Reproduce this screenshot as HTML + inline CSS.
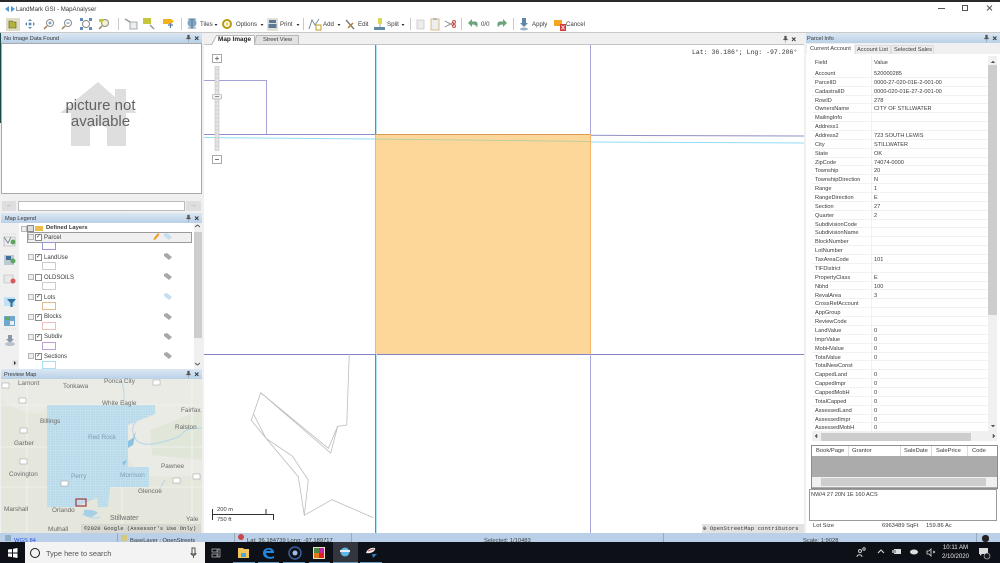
<!DOCTYPE html>
<html><head><meta charset="utf-8"><style>
html,body{margin:0;padding:0;width:1000px;height:563px;overflow:hidden;background:#f0f0f0;font-family:"Liberation Sans",sans-serif;color:#333}
div,span,svg{position:absolute}
.t{font-size:6.100px;line-height:8px;white-space:nowrap;color:#3a3a3a}
.hd{background:linear-gradient(#dbe7f3,#b9d0e8);height:10px}
.hd .t{left:3px;top:2px;color:#333;font-size:5.600px}
.sep{width:1px;height:12px;top:18px;background:#c9c9c9}
.sw{left:42px;width:12px;height:6px;background:#fff;border:1px solid #ccc}
.ck{left:35px;width:5px;height:5px;border:1px solid #8a8a8a;background:#fff;font-size:6px;line-height:5px;text-align:center;color:#444}
.ex{left:28px;width:4px;height:4px;border:1px solid #b5b5b5;background:#eee}
.lb{left:44px;font-size:6px}
.r{left:0;width:176px;height:8.860px;border-bottom:1px solid #f1f1f1;box-sizing:border-box}
.r .t{top:1px;line-height:8px;font-size:5.600px}
.r .a{left:3px}.r .b{left:62px}
.m{font-size:6.400px;color:#6a6a6a;white-space:nowrap;line-height:8px}
.st{top:3.500px;font-size:5.800px}
</style></head><body>
<div style="left:0;top:0;width:1000px;height:2px;background:#2a2a2a"></div>
<div style="left:0;top:2px;width:1000px;height:30px;background:#fff"></div>
<svg style="left:5px;top:5px" width="10" height="8" viewBox="0 0 10 8"><path d="M0 4 L4 1 V7 Z M10 4 L6 1 V7 Z" fill="#4d9ad6"/></svg>
<div class="t" style="left:16px;top:6px;font-size:6.100px">LandMark GSI - MapAnalyser</div>
<svg style="left:936px;top:3px" width="60" height="12" viewBox="0 0 60 12"><path d="M2 5.500H9" stroke="#555"/><path d="M26.500 2.500h5v5h-5z" fill="none" stroke="#555"/><path d="M51 2.500L56 7.500M56 2.500L51 7.500" stroke="#555"/></svg>

<!-- toolbar -->
<div style="left:0;top:32px;width:1000px;height:1px;background:#c9c9c9"></div>
<div style="left:6px;top:18px;width:14px;height:13px;background:#e0ddc5"></div>
<div style="left:267px;top:18px;width:11px;height:13px;background:#e6e2d6"></div>
<svg style="left:0;top:16px" width="620" height="16" viewBox="0 0 620 16">
<path d="M9 5h3l1 1h3v6H9z" fill="#b4b43a" stroke="#55552a" stroke-width=".6"/>
<g fill="#5f8cb5"><path d="M30 3l2 2h-4zM30 13l2-2h-4zM25 8l2-2v4zM35 8l-2-2v4z"/><circle cx="30" cy="8" r="1.500"/></g>
<g fill="#fff" stroke="#8d8d8d"><circle cx="50" cy="7" r="3.500"/><circle cx="68" cy="7" r="3.500"/></g>
<path d="M47 10l-3 3M65 10l-3 3" stroke="#a08050" stroke-width="1.500"/><path d="M48.500 7h3M50 5.500v3M66.500 7h3" stroke="#4a7fb0"/>
<path d="M80 2h3v3h-3zM89 2h3v3h-3zM80 11h3v3h-3zM89 11h3v3h-3z" fill="#5f8cb5"/><circle cx="86" cy="8" r="3.500" fill="#fff" stroke="#888"/>
<circle cx="105" cy="7" r="3.500" fill="#f3f1c8" stroke="#8d8d8d"/><path d="M102 10l-3 3" stroke="#a08050" stroke-width="1.500"/><path d="M99 3h4v3h-4z" fill="#c4c440"/>
<path d="M125 3l5 3" stroke="#999" stroke-width="1.500"/><path d="M130 6h7v7h-7z" fill="#eee" stroke="#88979f" stroke-width=".8"/>
<path d="M143 2h8v6h-8z" fill="#c6c63c"/><path d="M150 9l4 4" stroke="#999" stroke-width="1.500"/>
<path d="M163 3h8l3 2-3 3h-8z" fill="#f3b21c"/><path d="M168 9h5M170.500 7v5" stroke="#5f7fa0" stroke-width="1.200"/>
<circle cx="192" cy="7" r="4.500" fill="#7fa6c4"/><path d="M188 3h8M188 12h8M192 3v10" stroke="#4e7491" stroke-width=".8"/>
<circle cx="227" cy="8" r="4" fill="none" stroke="#b99a10" stroke-width="2"/><circle cx="227" cy="8" r="1.500" fill="#e5d35c"/>
<path d="M268 3h9v10h-9z" fill="#ddd"/><path d="M269 4h7v3h-7zM268.500 8h8v4h-8z" fill="#5c7996"/>
<path d="M309 13L312 4l3 5 4-6" fill="none" stroke="#7a8d9a"/><path d="M316 9h5v5h-5z" fill="#fff" stroke="#c79a20"/>
<path d="M346 4l8 9" stroke="#7d7d7d" stroke-width="1.500"/><path d="M348 12l5-5" stroke="#b87e30" stroke-width="1.500"/>
<path d="M378 2h4v6h-4z" fill="#d7d957"/><path d="M374 11h11v3h-11z" fill="#5f8aa6"/><path d="M380 8v3" stroke="#aaa"/>
<path d="M417 4h7v9h-7z" fill="#ececec" stroke="#c6c6c6" stroke-width=".8"/>
<path d="M431 3h8v11h-8z" fill="#eee" stroke="#d8b98a"/><path d="M433 2h4v2h-4z" fill="#bba"/>
<path d="M445 5l9 5M445 11l9-5" stroke="#8a8a8a"/><circle cx="454" cy="6" r="1.500" fill="none" stroke="#cc4b4b"/><circle cx="454" cy="10" r="1.500" fill="none" stroke="#cc4b4b"/>
<path d="M468 7l4-4v2.500h3c3 0 3 3 2 6-1-2-2-3-5-3v2.500z" fill="#69a67e"/>
<path d="M507 7l-4-4v2.500h-3c-3 0-3 3-2 6 1-2 2-3 5-3v2.500z" fill="#69a67e"/>
<path d="M522 2h4v5h2l-4 4-4-4h2z" fill="#5d86a8"/><ellipse cx="524" cy="13" rx="4" ry="1.500" fill="#9bb3c6"/>
<path d="M554 4h8v6h-8z" fill="#f5a623"/><path d="M560 8h6v7h-6z" fill="#cf3a3a"/><path d="M561.500 9.500l3 4M564.500 9.500l-3 4" stroke="#fff" stroke-width=".8"/>
</svg>
<div class="t" style="left:200px;top:21px">Tiles</div><div class="t" style="left:236px;top:21px">Options</div><div class="t" style="left:280px;top:21px">Print</div><div class="t" style="left:323px;top:21px">Add</div><div class="t" style="left:358px;top:21px">Edit</div><div class="t" style="left:387px;top:21px">Split</div><div class="t" style="left:481px;top:21px">0/0</div><div class="t" style="left:532px;top:21px">Apply</div><div class="t" style="left:566px;top:21px">Cancel</div>
<svg style="left:0;top:22px" width="420" height="6"><path d="M214.500 2h3l-1.500 2zM260.500 2h3l-1.500 2zM296.500 2h3l-1.500 2zM337.500 2h3l-1.500 2zM401.500 2h3l-1.500 2z" fill="#333"/></svg>
<div class="sep" style="left:118px"></div><div class="sep" style="left:181px"></div><div class="sep" style="left:303px"></div><div class="sep" style="left:410px"></div><div class="sep" style="left:461px"></div><div class="sep" style="left:513px"></div>

<!-- left: image panel -->
<div style="left:0;top:33px;width:1px;height:90px;background:#1d4a4a"></div>
<div class="hd" style="left:1px;top:33px;width:201px"><div class="t">No Image Data Found</div><svg style="left:184px;top:1px" width="17" height="9"><path d="M2.500 1h2v3h1v1h-4V4h1zM3.500 5v3" fill="#555" stroke="#555" stroke-width=".3"/><path d="M10 2.500l3.500 3.500M13.500 2.500L10 6" stroke="#333" stroke-width=".9"/></svg></div>
<div style="left:1px;top:43px;width:199px;height:149px;background:#fff;border:1px solid #a9a9a9"></div>
<svg style="left:0;top:0" width="202" height="200"><path d="M98 82L60 113H71V146H90V128Q98 122 107 128V146H126V113H137L126 103V89H115V97Z" fill="#dedede"/></svg>
<div style="left:1px;top:98px;width:199px;text-align:center;font-size:15px;line-height:16px;color:#636363">picture not<br>available</div>
<div style="left:2px;top:201px;width:14px;height:10px;background:#dedede"></div>
<div style="left:18px;top:201px;width:165px;height:8px;background:#fff;border:1px solid #bbb"></div>
<div style="left:186px;top:201px;width:15px;height:10px;background:#dedede"></div>
<div class="t" style="left:6px;top:202px;color:#999">←</div><div class="t" style="left:190px;top:202px;color:#999">→</div>

<!-- legend -->
<div class="hd" style="left:1px;top:213px;width:201px"><div class="t" style="left:4px">Map Legend</div><svg style="left:184px;top:1px" width="17" height="9"><path d="M2.500 1h2v3h1v1h-4V4h1zM3.500 5v3" fill="#555" stroke="#555" stroke-width=".3"/><path d="M10 2.500l3.500 3.500M13.500 2.500L10 6" stroke="#333" stroke-width=".9"/></svg></div>
<div style="left:19px;top:223px;width:175px;height:146px;background:#fff"></div>
<div style="left:194px;top:223px;width:8px;height:146px;background:#f0f0f0"></div>
<div style="left:194px;top:232px;width:8px;height:106px;background:#cdcdcd"></div>
<div style="left:21px;top:226px;width:4px;height:4px;border:1px solid #b5b5b5;background:#eee"></div>
<div style="left:27px;top:225px;width:5px;height:5px;border:1px solid #8a8a8a;background:#ddd"></div>
<div style="left:35px;top:226px;width:8px;height:5px;background:#eebc4a"></div>
<div class="t" style="left:46px;top:224px;font-weight:bold;font-size:5.800px">Defined Layers</div>
<div style="left:27px;top:232px;width:163px;height:9px;background:#f0f0f0;border:1px solid #9a9a9a"></div>
<div class="ex" style="top:234px"></div><div class="ck" style="top:234px">✓</div><div class="t lb" style="top:234px">Parcel</div><div class="sw" style="top:242px;border-color:#9a9ad8"></div>
<div class="ex" style="top:254px"></div><div class="ck" style="top:254px">✓</div><div class="t lb" style="top:254px">LandUse</div><div class="sw" style="top:262px"></div>
<div class="ex" style="top:274px"></div><div class="ck" style="top:274px"></div><div class="t lb" style="top:274px">OLDSOILS</div><div class="sw" style="top:282px"></div>
<div class="ex" style="top:294px"></div><div class="ck" style="top:294px">✓</div><div class="t lb" style="top:294px">Lots</div><div class="sw" style="top:302px;border-color:#e4b98e"></div>
<div class="ex" style="top:314px"></div><div class="ck" style="top:314px">✓</div><div class="t lb" style="top:313px">Blocks</div><div class="sw" style="top:322px;border-color:#f0bcbc"></div>
<div class="ex" style="top:334px"></div><div class="ck" style="top:334px">✓</div><div class="t lb" style="top:333px">Subdiv</div><div class="sw" style="top:342px;border-color:#bb9fd6"></div>
<div class="ex" style="top:353px"></div><div class="ck" style="top:353px">✓</div><div class="t lb" style="top:353px">Sections</div><div class="sw" style="top:361px;border-color:#a8e0f2"></div>
<svg style="left:0;top:223px" width="202" height="146" viewBox="0 0 202 146">
<path d="M154 15l4-5 1.500 1.500-4 5-2 .5z" fill="#ee9a2c"/>
<g fill="#c5dff2"><path d="M164 11l3-1 5 4-3 3-5-4z"/><path d="M164 71l3-1 5 4-3 3-5-4z"/></g>
<g fill="#a8a8a8"><path d="M164 31l3-1 5 4-3 3-5-4z"/><path d="M164 51l3-1 5 4-3 3-5-4z"/><path d="M164 91l3-1 5 4-3 3-5-4z"/><path d="M164 111l3-1 5 4-3 3-5-4z"/><path d="M164 130l3-1 5 4-3 3-5-4z"/></g>
<path d="M4 14h11v9H4z" fill="#eee" stroke="#a9a9a9" stroke-width=".6"/><path d="M4 14l4 6 3-6" fill="none" stroke="#7a8d9a"/><circle cx="13" cy="19" r="2.500" fill="#5fa55f"/>
<path d="M4 32h10v10H4z" fill="#bcc8d2"/><path d="M6 33h5v4H6z" fill="#3f6f97"/><circle cx="13" cy="38" r="2.500" fill="#5fa55f"/>
<path d="M4 52h9v8H4z" fill="#e9e9e9" stroke="#b5b5b5" stroke-width=".6"/><circle cx="13" cy="58" r="2.500" fill="#d9585c"/>
<path d="M4 74h11v9H4z" fill="#bfe1f3"/><path d="M7 76h9l-3.500 4v4h-2v-4z" fill="#36719d"/>
<path d="M4 93h11v10H4z" fill="#6fa7cf"/><path d="M5 94h5v3H5z" fill="#64a85f"/><path d="M10 98h4v4h-4z" fill="#eee"/>
<path d="M8 112h4v4h2l-4 4-4-4h2z" fill="#8898a8"/><ellipse cx="10" cy="121" rx="5" ry="2" fill="#b8c2cc"/>
<path d="M3 11h14M3 106h14" stroke="#d6d6d6" stroke-dasharray="1 1"/>
<path d="M195 4l2.500-2 2.500 2M195 140l2.500 2 2.500-2" stroke="#555" fill="none"/>
<path d="M12 137h6v6h-6z" fill="#e4e4e4"/><path d="M14 138l2 2-2 2z" fill="#333"/>
</svg>

<!-- preview -->
<div class="hd" style="left:1px;top:369px;width:201px"><div class="t">Preview Map</div><svg style="left:184px;top:1px" width="17" height="9"><path d="M2.500 1h2v3h1v1h-4V4h1zM3.500 5v3" fill="#555" stroke="#555" stroke-width=".3"/><path d="M10 2.500l3.500 3.500M13.500 2.500L10 6" stroke="#333" stroke-width=".9"/></svg></div>
<svg style="left:1px;top:379px" width="201" height="154" viewBox="1 379 201 154">
<defs><pattern id="g" width="2.500" height="2.500" patternUnits="userSpaceOnUse"><rect width="2.500" height="2.500" fill="#b4d8e9"/><path d="M0 .5H2.500M.5 0V2.500" stroke="#cfe6f1" stroke-width=".5"/></pattern></defs>
<rect x="1" y="379" width="201" height="154" fill="#ebebe5"/>
<path d="M1 400q30 20 45 10t50 20 40 40 66 5V533H1z" fill="#e5e7dc"/>
<path d="M150 430l52-20v50l-50-5z" fill="#e0e6d8"/>
<path d="M121 379q5 15 2 28M155 413q-25 5-22 20t25 10 25-10 19-5M130 441q-5 10-3 20M165 480l-6 10M82 514q12 6 18 3" fill="none" stroke="#b5d6ea" stroke-width="1"/>
<path d="M1 405H202M1 447H202M1 487H202M27 379V533M122 405V533M192 379V533" stroke="#f4f4f0" stroke-width=".8"/>
<path d="M47 405H155L155 414 128 425V467H149V487H110L108 507H98L97 498 75 507H47Z" fill="url(#g)"/>
<path d="M128 441l5-3 3-7-3 14-5 3zM122 462l5-2-3 6z" fill="#8dc1e0"/>
<path d="M84 510q10-1 14 3l-6 4-8-2z" fill="#a6cfe8"/>
<rect x="76" y="499" width="10" height="7" fill="none" stroke="#a1393e" stroke-width="1.200"/>
<g fill="#fff" stroke="#999" stroke-width=".5"><rect x="2" y="383" width="7" height="5"/><rect x="153" y="380" width="7" height="5"/><rect x="19" y="398" width="7" height="5"/><rect x="20" y="428" width="7" height="5"/><rect x="20" y="459" width="7" height="5"/><rect x="173" y="478" width="7" height="5"/><rect x="193" y="474" width="7" height="5"/><rect x="61" y="481" width="7" height="5"/></g>
</svg>
<div class="m" style="left:18px;top:380px">Lamont</div><div class="m" style="left:63px;top:383px">Tonkawa</div><div class="m" style="left:104px;top:378px">Ponca City</div><div class="m" style="left:102px;top:400px">White Eagle</div><div class="m" style="left:181px;top:407px">Fairfax</div><div class="m" style="left:40px;top:418px">Billings</div><div class="m" style="left:175px;top:424px">Ralston</div><div class="m" style="left:88px;top:434px;color:#7d9fb3">Red Rock</div><div class="m" style="left:14px;top:440px">Garber</div><div class="m" style="left:161px;top:463px">Pawnee</div><div class="m" style="left:9px;top:471px">Covington</div><div class="m" style="left:120px;top:472px;color:#7d9fb3">Morrison</div><div class="m" style="left:71px;top:473px;color:#7d9fb3">Perry</div><div class="m" style="left:138px;top:488px">Glencoe</div><div class="m" style="left:4px;top:506px">Marshall</div><div class="m" style="left:52px;top:507px">Orlando</div><div class="m" style="left:110px;top:515px;font-size:7px">Stillwater</div><div class="m" style="left:186px;top:516px">Yale</div><div class="m" style="left:48px;top:526px">Mulhall</div>
<div style="left:81px;top:524px;width:120px;height:9px;background:#d8d8d0"></div>
<div class="t" style="left:84px;top:525px;font-family:'Liberation Mono',monospace;font-size:5.500px">©2020 Google (Assessor's Use Only)</div>

<!-- tabs -->
<div style="left:204px;top:33px;width:600px;height:12px;background:#f0f0f0"></div>
<div style="left:204px;top:44px;width:600px;height:1px;background:#c4c4c4"></div>
<svg style="left:204px;top:33px" width="100" height="12"><path d="M7.500 12L12.500 2.500H50.500V12" fill="#fff" stroke="#b8b8b8"/><path d="M50.500 11L52.500 2.500H94.500V11" fill="#e2e2e2" stroke="#b8b8b8"/></svg>
<div class="t" style="left:218px;top:36px;font-weight:bold;color:#222;font-size:6.400px">Map Image</div>
<div class="t" style="left:263px;top:36px;font-size:5.700px">Street View</div>
<svg style="left:782px;top:35px" width="17" height="9"><path d="M2.500 1h2v3h1v1h-4V4h1zM3.500 5v3" fill="#555" stroke="#555" stroke-width=".3"/><path d="M10 2.500l3.500 3.500M13.500 2.500L10 6" stroke="#333" stroke-width=".9"/></svg>

<!-- map -->
<svg style="left:204px;top:45px" width="600" height="488" viewBox="204 45 600 488">
<rect x="204" y="45" width="600" height="488" fill="#fff"/>
<path d="M204 80.500H266.500V135" fill="none" stroke="#a3a3d6"/>
<path d="M204 134.500L375 134.500 590 135.300 804 136" fill="none" stroke="#8f8fc6"/>
<path d="M204 137.500L375 139 590 142 804 143" fill="none" stroke="#92dcf5"/>
<path d="M204 354.500H804" stroke="#8282c4"/>
<path d="M375.500 45V533" stroke="#6f80c2"/><path d="M376.500 45V533" stroke="#b4e3f6"/>
<path d="M590.500 45V533" stroke="#a7a7dc"/>
<rect x="375" y="134" width="216" height="220" fill="#fdd79a"/>
<path d="M375 139L590 141.500" stroke="#bccf9f"/>
<path d="M375.500 134V354M590.500 134V354" stroke="#f6b56a"/>
<path d="M375 134.500H590" stroke="#df9a5b"/>
<g fill="none" stroke="#bdbdbd" stroke-width=".8">
<path d="M349.300 354L346.700 425 337.700 426.300 330.700 453 260.700 392.700 251.300 420.300 266 438.300 298.300 476.700 304.300 515.300 332 499.700 373.300 517.700"/>
<path d="M337.700 426.300L328.300 448.300 260.700 392.700M253.700 414.300L266 438.300 292.300 456 308.300 480 304.300 515.300"/>
</g>
<path d="M212.500 509V520M212.500 514.500H273.500V520M266 509V514" fill="none" stroke="#333"/>
<rect x="212.500" y="54.500" width="9" height="8" fill="#fff" stroke="#aaa"/><path d="M215 58.500h4M217 56.500v4" stroke="#777"/>
<rect x="212.500" y="155.500" width="9" height="8" fill="#fff" stroke="#aaa"/><path d="M215 159.500h4" stroke="#777"/>
<rect x="215" y="66.500" width="4" height="84" fill="#e4e4e4" stroke="#c4c4c4" stroke-width=".6"/>
<path d="M215 70h4M215 74h4M215 78h4M215 82h4M215 86h4M215 90h4M215 102h4M215 106h4M215 110h4M215 114h4M215 118h4M215 122h4M215 126h4M215 130h4M215 134h4M215 138h4M215 142h4M215 146h4" stroke="#bbb" stroke-width=".6"/>
<rect x="212.500" y="94.500" width="9" height="4.500" rx="1" fill="#f3f3f3" stroke="#999" stroke-width=".6"/><path d="M215 96.700h4" stroke="#555" stroke-width=".7"/>
</svg>
<div class="t" style="left:217px;top:506px;font-size:5.800px">200 m</div>
<div class="t" style="left:217px;top:516px;font-size:5.800px">750 ft</div>
<div class="t" style="left:692px;top:49px;font-family:'Liberation Mono',monospace;font-size:6.500px;color:#333">Lat: 36.186°; Lng: -97.206°</div>
<div style="left:702px;top:524px;width:102px;height:9px;background:#e2e2e2"></div>
<div class="t" style="left:703px;top:525px;font-family:'Liberation Mono',monospace;font-size:5.700px">⊕ OpenStreetMap contributors</div>

<!-- right panel -->
<div class="hd" style="left:806px;top:33px;width:194px"><div class="t" style="left:1px">Parcel Info</div><svg style="left:177px;top:1px" width="17" height="9"><path d="M2.500 1h2v3h1v1h-4V4h1zM3.500 5v3" fill="#555" stroke="#555" stroke-width=".3"/><path d="M10 2.500l3.500 3.500M13.500 2.500L10 6" stroke="#333" stroke-width=".9"/></svg></div>
<div style="left:806px;top:54px;width:194px;height:479px;background:#fff"></div>
<div style="left:807px;top:44px;width:47px;height:11px;background:#fff;z-index:2"></div>
<div style="left:855px;top:45px;width:34px;height:8px;background:#ececec;border:1px solid #ddd;border-bottom:0"></div>
<div style="left:891px;top:45px;width:41px;height:8px;background:#ececec;border:1px solid #ddd;border-bottom:0"></div>
<div class="t" style="left:810px;top:45px;z-index:3;font-size:5.700px">Current Account</div><div class="t" style="left:857px;top:46px;font-size:5.700px">Account List</div><div class="t" style="left:894px;top:46px;font-size:5.700px">Selected Sales</div>
<div style="left:812px;top:56px;width:176px;height:376px;background:#fff">
<div class="t" style="left:3px;top:3px;font-size:5.600px">Field</div><div class="t" style="left:62px;top:3px;font-size:5.600px">Value</div>
<div style="left:59px;top:0;width:1px;height:376px;background:#f0f0f0"></div>
<div style="left:0;top:13px;width:176px;height:363px;overflow:hidden">
<div class="r" style="top:0"><span class="t a">Account</span><span class="t b">520000285</span></div>
<div class="r" style="top:8.860px"><span class="t a">ParcelID</span><span class="t b">0000-27-020-01E-2-001-00</span></div>
<div class="r" style="top:17.720px"><span class="t a">CadastralID</span><span class="t b">0000-020-01E-27-2-001-00</span></div>
<div class="r" style="top:26.580px"><span class="t a">RowID</span><span class="t b">278</span></div>
<div class="r" style="top:35.440px"><span class="t a">OwnersName</span><span class="t b">CITY OF STILLWATER</span></div>
<div class="r" style="top:44.300px"><span class="t a">MailingInfo</span></div>
<div class="r" style="top:53.160px"><span class="t a">Address1</span></div>
<div class="r" style="top:62.020px"><span class="t a">Address2</span><span class="t b">723 SOUTH LEWIS</span></div>
<div class="r" style="top:70.880px"><span class="t a">City</span><span class="t b">STILLWATER</span></div>
<div class="r" style="top:79.740px"><span class="t a">State</span><span class="t b">OK</span></div>
<div class="r" style="top:88.600px"><span class="t a">ZipCode</span><span class="t b">74074-0000</span></div>
<div class="r" style="top:97.460px"><span class="t a">Township</span><span class="t b">20</span></div>
<div class="r" style="top:106.320px"><span class="t a">TownshipDirection</span><span class="t b">N</span></div>
<div class="r" style="top:115.180px"><span class="t a">Range</span><span class="t b">1</span></div>
<div class="r" style="top:124.040px"><span class="t a">RangeDirection</span><span class="t b">E</span></div>
<div class="r" style="top:132.900px"><span class="t a">Section</span><span class="t b">27</span></div>
<div class="r" style="top:141.760px"><span class="t a">Quarter</span><span class="t b">2</span></div>
<div class="r" style="top:150.620px"><span class="t a">SubdivisionCode</span></div>
<div class="r" style="top:159.480px"><span class="t a">SubdivisionName</span></div>
<div class="r" style="top:168.340px"><span class="t a">BlockNumber</span></div>
<div class="r" style="top:177.200px"><span class="t a">LotNumber</span></div>
<div class="r" style="top:186.060px"><span class="t a">TaxAreaCode</span><span class="t b">101</span></div>
<div class="r" style="top:194.920px"><span class="t a">TIFDistrict</span></div>
<div class="r" style="top:203.780px"><span class="t a">PropertyClass</span><span class="t b">E</span></div>
<div class="r" style="top:212.640px"><span class="t a">Nbhd</span><span class="t b">100</span></div>
<div class="r" style="top:221.500px"><span class="t a">RevalArea</span><span class="t b">3</span></div>
<div class="r" style="top:230.360px"><span class="t a">CrossRefAccount</span></div>
<div class="r" style="top:239.220px"><span class="t a">AppGroup</span></div>
<div class="r" style="top:248.080px"><span class="t a">ReviewCode</span></div>
<div class="r" style="top:256.940px"><span class="t a">LandValue</span><span class="t b">0</span></div>
<div class="r" style="top:265.800px"><span class="t a">ImprValue</span><span class="t b">0</span></div>
<div class="r" style="top:274.660px"><span class="t a">MobHValue</span><span class="t b">0</span></div>
<div class="r" style="top:283.520px"><span class="t a">TotalValue</span><span class="t b">0</span></div>
<div class="r" style="top:292.380px"><span class="t a">TotalNewConst</span></div>
<div class="r" style="top:301.240px"><span class="t a">CappedLand</span><span class="t b">0</span></div>
<div class="r" style="top:310.100px"><span class="t a">CappedImpr</span><span class="t b">0</span></div>
<div class="r" style="top:318.960px"><span class="t a">CappedMobH</span><span class="t b">0</span></div>
<div class="r" style="top:327.820px"><span class="t a">TotalCapped</span><span class="t b">0</span></div>
<div class="r" style="top:336.680px"><span class="t a">AssessedLand</span><span class="t b">0</span></div>
<div class="r" style="top:345.540px"><span class="t a">AssessedImpr</span><span class="t b">0</span></div>
<div class="r" style="top:354.400px"><span class="t a">AssessedMobH</span><span class="t b">0</span></div>
</div></div>
<div style="left:988px;top:56px;width:9px;height:376px;background:#f0f0f0"></div>
<div style="left:988px;top:65px;width:9px;height:250px;background:#cdcdcd"></div>
<div style="left:812px;top:432px;width:185px;height:9px;background:#f0f0f0"></div>
<div style="left:821px;top:433px;width:150px;height:8px;background:#cdcdcd"></div>
<svg style="left:812px;top:56px" width="186" height="386"><path d="M179 7l2-2 2 2M179 369l2 2 2-2M3 380l2-2v4zM183 380l-2-2v4z" fill="#555" stroke="#555" stroke-width=".5"/></svg>

<div style="left:811px;top:445px;width:185px;height:42px;background:#ababab;border:1px solid #8d8d8d"></div>
<div style="left:812px;top:446px;width:185px;height:10px;background:#fff"></div>
<div class="t" style="left:816px;top:447px;font-size:5.800px">Book/Page</div><div class="t" style="left:852px;top:447px;font-size:5.800px">Grantor</div><div class="t" style="left:904px;top:447px;font-size:5.800px">SaleDate</div><div class="t" style="left:936px;top:447px;font-size:5.800px">SalePrice</div><div class="t" style="left:972px;top:447px;font-size:5.800px">Code</div>
<div style="left:848px;top:446px;width:1px;height:10px;background:#ddd"></div><div style="left:900px;top:446px;width:1px;height:10px;background:#ddd"></div><div style="left:931px;top:446px;width:1px;height:10px;background:#ddd"></div><div style="left:967px;top:446px;width:1px;height:10px;background:#ddd"></div>
<div style="left:812px;top:477px;width:185px;height:10px;background:#f0f0f0"></div>
<div style="left:821px;top:478px;width:165px;height:8px;background:#cdcdcd"></div>
<div style="left:809px;top:489px;width:186px;height:30px;background:#fff;border:1px solid #9a9a9a"></div>
<div class="t" style="left:811px;top:491px;font-size:5.700px">NW/4 27 20N 1E 160 ACS</div>
<div class="t" style="left:813px;top:522px;font-size:5.800px">Lot Size</div><div class="t" style="left:882px;top:522px;font-size:5.800px">6963489 SqFt</div><div class="t" style="left:926px;top:522px;font-size:5.800px">159.86 Ac</div>

<!-- status -->
<div style="left:0;top:533px;width:1000px;height:9px;background:#b9d0e8;overflow:hidden">
<div class="t st" style="left:14px;color:#2a4fe0">WGS 84</div>
<div style="left:5px;top:2px;width:6px;height:6px;background:#8fb0c4"></div>
<div style="left:117px;top:0;width:1px;height:10px;background:#96a9bd"></div>
<div style="left:121px;top:2px;width:6px;height:6px;background:#d8c97a"></div>
<div class="t st" style="left:130px">BaseLayer : OpenStreets</div>
<div style="left:234px;top:0;width:1px;height:10px;background:#96a9bd"></div>
<div style="left:238px;top:1px;width:6px;height:6px;border-radius:3px;background:#c9454a"></div>
<div class="t st" style="left:247px">Lat: 36.184739  Long: -97.189717</div>
<div style="left:351px;top:0;width:1px;height:10px;background:#96a9bd"></div>
<div class="t st" style="left:484px">Selected: 1/10483</div>
<div style="left:663px;top:0;width:1px;height:10px;background:#96a9bd"></div>
<div class="t st" style="left:803px">Scale: 1:9028</div>
<div style="left:976px;top:0;width:1px;height:10px;background:#96a9bd"></div>
<div style="left:982px;top:2px;width:7px;height:7px;border-radius:3px;background:#222"></div>
</div>

<!-- taskbar -->
<div style="left:0;top:542px;width:1000px;height:21px;background:#0d1016"></div>
<div style="left:25px;top:542px;width:180px;height:21px;background:#f3f3f3"></div>
<svg style="left:8px;top:548px" width="10" height="10"><path d="M0 1.500L4 1V4.500H0zM5 .9L9.500 0V4.500H5zM0 5.500H4V9L0 8.500zM5 5.500H9.500V10L5 9.200z" fill="#fff"/></svg>
<div style="left:30px;top:548px;width:8px;height:8px;border:1.500px solid #1a1a1a;border-radius:50%"></div>
<div class="t" style="left:46px;top:549px;font-size:7.400px;line-height:10px;color:#555">Type here to search</div>
<svg style="left:190px;top:547px" width="8" height="12"><path d="M2 1h3v6H2z" fill="none" stroke="#555"/><path d="M1 6c0 3 5 3 5 0M3.500 8.500V11" fill="none" stroke="#555"/></svg>
<div style="left:333px;top:542px;width:25px;height:21px;background:#33363c"></div>
<svg style="left:205px;top:543px" width="180" height="20" viewBox="205 543 180 20">
<path d="M212 549h5v3h-5zM212 554h5v3h-5zM218 549h2v8h-2z" fill="none" stroke="#bbb" stroke-width=".7"/>
<path d="M238 548h5l1 1h5v9h-11z" fill="#f2c55c"/><path d="M241 553h5v4h-5z" fill="#4ba5d8"/>
<path d="M274 553h-8c0 4 5 5 8 3v2c-5 2-11 0-11-5 0-6 10-7 11-1v1zm-3-2c-.5-2-4-2-5 0z" fill="#1f88e5"/>
<circle cx="295" cy="553" r="6" fill="none" stroke="#3a5f9e" stroke-width="1.500"/><circle cx="295" cy="553" r="2.500" fill="#9fc0ea"/>
<rect x="313" y="547" width="12" height="12" fill="#e9e4c2"/><rect x="314" y="548" width="5" height="5" fill="#4d8a46"/><rect x="319" y="548" width="5" height="5" fill="#c421ac"/><rect x="314" y="553" width="5" height="5" fill="#e07b18"/><rect x="319" y="553" width="5" height="5" fill="#e02020"/>
<circle cx="345" cy="552" r="4.500" fill="#5fb7e6"/><path d="M340 550h10v2h-10z" fill="#e6eef2"/>
<path d="M366 553c1-4 6-6 9-5 1 3-4 6-9 5z" fill="#eee"/><path d="M368 551l6-2" stroke="#c55" /><path d="M372 554h5l-4 4z" fill="#2f7fc0"/>
<path d="M233 562.500h22M258 562.500h21M283 562.500h22M309 562.500h21M333 562.500h25M360 562.500h22" stroke="#6a9dc0"/>
</svg>
<svg style="left:855px;top:545px" width="140" height="16" viewBox="855 545 140 16">
<circle cx="860" cy="551" r="1.500" fill="none" stroke="#ccc"/><path d="M857 557c0-3 5-3 5 0" fill="none" stroke="#ccc"/><circle cx="864" cy="549" r="1.200" fill="none" stroke="#ccc"/>
<path d="M878 553l3-3 3 3" fill="none" stroke="#ddd"/>
<path d="M894 549h7v5h-7z" fill="#ddd"/><path d="M892 550h4v3h-4z" fill="#999"/>
<ellipse cx="914" cy="552" rx="4" ry="2.500" fill="#ddd"/>
<path d="M927 551h2l2-2v7l-2-2h-2z" fill="none" stroke="#ddd" stroke-width=".8"/><path d="M933 551l2 2M935 551l-2 2" stroke="#ddd" stroke-width=".7"/>
<path d="M979 548h9v6h-6l-2 2v-2h-1z" fill="#ddd"/><circle cx="987" cy="556" r="3" fill="#16191f" stroke="#ccc" stroke-width=".6"/>
</svg>
<div class="t" style="left:936px;top:544px;color:#e8e8e8;font-size:6.100px;width:39px;text-align:center">10:11 AM</div>
<div class="t" style="left:936px;top:553px;color:#e8e8e8;font-size:6.100px;width:39px;text-align:center">2/10/2020</div>
</body></html>
